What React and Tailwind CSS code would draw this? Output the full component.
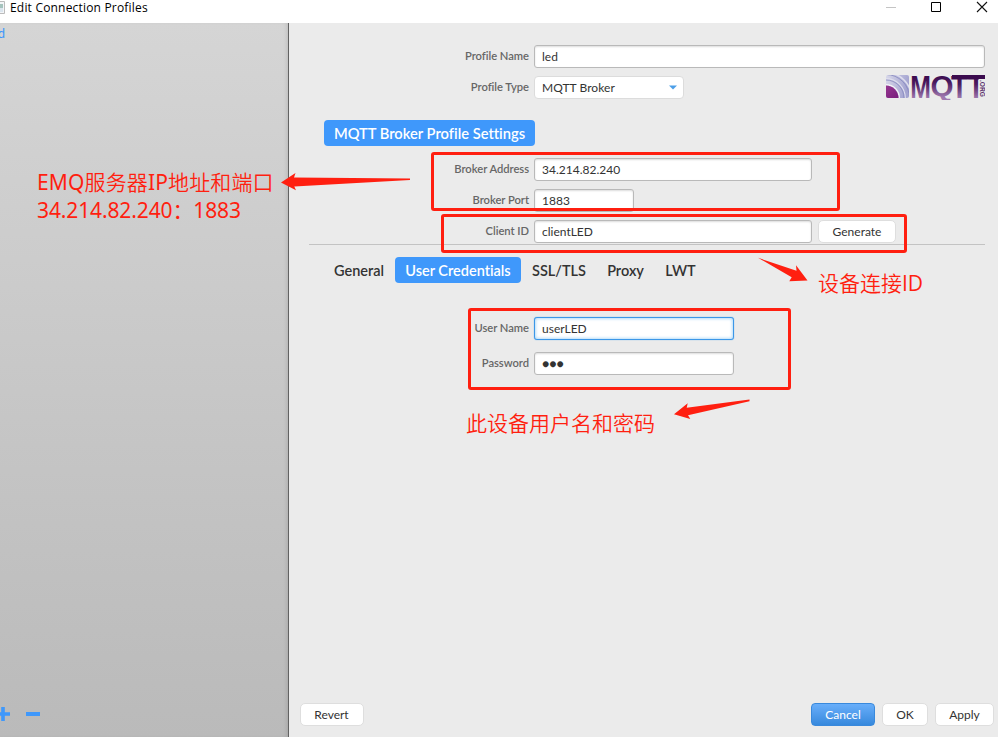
import { useState } from "react";

const inputClass =
  "h-[23px] rounded-[3px] border border-[#b9b9b9] bg-white pl-[7px] pb-px text-[12px] text-[#333] shadow-[inset_0_1px_2px_rgba(0,0,0,0.14)] outline-none";
const buttonClass =
  "flex h-[23px] items-center justify-center rounded-[5px] border border-[#dedede] bg-white pt-px text-[12px] text-[#333]";
const noteClass =
  "absolute whitespace-nowrap font-['Noto_Sans','Noto_Sans_CJK_SC',sans-serif] text-[21px] font-[350] leading-7 text-[#ff1f10]";

const tabs = [
  { name: "General", className: "w-[71px] pr-px" },
  { name: "User Credentials", className: "w-[126px]" },
  { name: "SSL/TLS", className: "w-[76px]" },
  { name: "Proxy", className: "w-[57px]" },
  { name: "LWT", className: "w-[53px]" },
];

function Label({ children }) {
  return (
    <label className="w-[240px] pr-[5px] text-right text-[11.2px] font-semibold tracking-[-0.03px] text-[#666]">
      {children}
    </label>
  );
}

function MqttLogo() {
  return (
    <svg className="h-[26px] w-[99px]" viewBox="0 0 99 26">
      <defs>
        <linearGradient id="letters" gradientUnits="userSpaceOnUse" x1="0" y1="-21" x2="0" y2="1">
          <stop offset="0" stopColor="#3b0b4e" />
          <stop offset="0.35" stopColor="#4a1b5f" />
          <stop offset="1" stopColor="#a07ab0" />
        </linearGradient>
        <linearGradient id="corner" x1="0" y1="0" x2="1" y2="1">
          <stop offset="0" stopColor="#a3429a" />
          <stop offset="1" stopColor="#6b1272" />
        </linearGradient>
        <linearGradient id="tile" x1="0" y1="0" x2="1" y2="0.3">
          <stop offset="0" stopColor="#d9d9ea" />
          <stop offset="1" stopColor="#a3a3d0" />
        </linearGradient>
        <clipPath id="tileClip">
          <rect x="0" y="1" width="23" height="23" rx="2" />
        </clipPath>
      </defs>
      <g clipPath="url(#tileClip)">
        <rect x="0" y="1" width="23" height="23" fill="url(#tile)" />
        <g fill="none">
          <circle cx="0" cy="24" r="25.5" stroke="#dedeee" strokeWidth="1.5" />
          <circle cx="0" cy="24" r="23.5" stroke="#8588be" strokeWidth="0.8" />
          <circle cx="0" cy="24" r="19.3" stroke="#dedeee" strokeWidth="1.2" />
          <circle cx="0" cy="24" r="18" stroke="#8588be" strokeWidth="0.8" />
          <circle cx="0" cy="24" r="13.3" stroke="#f3f3f8" strokeWidth="1.4" />
        </g>
        <circle cx="0" cy="24" r="12.5" fill="url(#corner)" />
      </g>
      <g fill="url(#letters)" fontFamily="Liberation Sans, sans-serif" fontWeight="700">
        <text transform="translate(24.300 23.500) scale(0.8 1)" fontSize="31">M</text>
        <text transform="translate(44.500 22) scale(1.020 1)" fontSize="29">Q</text>
        <text transform="translate(65 23.500) scale(0.9 1)" fontSize="31">T</text>
        <text transform="translate(81.400 23.500) scale(0.9 1)" fontSize="31">T</text>
      </g>
      <rect x="66" y="1" width="33" height="4" fill="#3b0b4e" />
      <rect x="92.800" y="5" width="6.200" height="19" fill="#ebebeb" />
      <text
        transform="translate(93.700 6) rotate(90)"
        fontFamily="Liberation Sans, sans-serif"
        fontSize="7"
        fontWeight="700"
        fill="#5b3570"
        textLength="17"
        lengthAdjust="spacingAndGlyphs"
      >
        .ORG
      </text>
    </svg>
  );
}

// Red boxes, arrows and captions drawn over the dialog
function Annotations() {
  return (
    <div className="pointer-events-none absolute inset-0">
      <div className="absolute left-[431px] top-[152px] h-[59px] w-[409px] rounded-[3px] border-3 border-[#ff1f10]" />
      <div className="absolute left-[441px] top-[214px] h-[39px] w-[466px] rounded-[3px] border-3 border-[#ff1f10]" />
      <div className="absolute left-[468px] top-[308px] h-[82px] w-[323px] rounded-[3px] border-3 border-[#ff1f10]" />
      <svg className="absolute inset-0 h-full w-full" viewBox="0 0 998 737" fill="#ff1f10">
        <path d="M281 182.4 295.5 173 294 177.5 410 178.6V180L294.3 186.5 296 190.3Z" />
        <path d="M758 257.8 796.5 270.8 796 265.2 807.5 280.4 789.3 281.3 791.7 277.3Z" />
        <path d="M674 414.3 687.7 403.2 686.7 407.7 749.5 399.5V401.2L688 415.2 690.3 419Z" />
      </svg>
      <div className={`${noteClass} left-[37px] top-[168px]`}>
        <p className="tracking-[0.13px]">
          <span className="font-normal">EMQ</span>服务器<span className="font-normal">IP</span>地址和端口
        </p>
        <p className="font-normal tracking-[-0.12px]">34.214.82.240：1883</p>
      </div>
      <p className={`${noteClass} left-[818px] top-[269px]`}>
        设备连接<span className="font-['Open_Sans',sans-serif] font-normal">ID</span>
      </p>
      <p className={`${noteClass} left-[466px] top-[409px]`}>此设备用户名和密码</p>
    </div>
  );
}

export default function App() {
  const [activeTab, setActiveTab] = useState("User Credentials");
  const [profile, setProfile] = useState({
    name: "led",
    address: "34.214.82.240",
    port: "1883",
    clientId: "clientLED",
    userName: "userLED",
    password: "●●●",
  });

  const handleChange = (e) => {
    const { name, value } = e.target;
    setProfile({ ...profile, [name]: value });
  };

  return (
    <div className="relative flex h-[737px] w-[998px] flex-col overflow-hidden bg-[#ebebeb] font-[Lato,sans-serif] [font-variant-ligatures:none]">
      <header className="flex h-[23px] shrink-0 justify-between bg-white">
        <div className="flex">
          <svg className="mt-px h-[13px] w-[5px]" viewBox="0 0 5 13">
            <path d="M0 .5h4.500v12H0" fill="#f3f5f7" stroke="#bbb" />
            <path d="M0 3h3v4H0z" fill="#a5c3bd" />
            <path d="M0 7h3v4H0z" fill="#dbe5ee" />
          </svg>
          <h1 className="ml-[5px] font-['Open_Sans',sans-serif] text-[12px] leading-[15px] tracking-[0.19px] text-black">
            Edit Connection Profiles
          </h1>
        </div>
        <svg className="h-[15px] w-[112px]" viewBox="0 0 112 15" fill="none">
          <path d="M0 7.5h10" stroke="#c4c4c4" />
          <path d="M45.500 2.500h9v9h-9z" stroke="#000" />
          <path d="M91 2l10 10M101 2 91 12" stroke="#111" strokeWidth="1.100" />
        </svg>
      </header>

      <div className="flex min-h-0 flex-1">
        <aside className="flex w-[289px] flex-col justify-between border-r border-[#626262] bg-linear-to-b from-[#d5d5d5] to-[#bababa] shadow-[inset_-3px_0_4px_-2px_rgba(0,0,0,0.12)]">
          <div className="flex w-[5px] justify-end overflow-hidden text-[13px] leading-[21px] text-[#3f98fb]">led</div>
          <div className="mb-[16px] flex h-[14px] items-center gap-[16px]">
            <svg className="h-[14px] w-[10px]" viewBox="0 0 10 14">
              <path d="M0 5.200h1.200V0h3.600v5.200H10v3.600H4.800V14H1.200V8.800H0z" fill="#3f98fb" />
            </svg>
            <span className="h-[4px] w-[14px] bg-[#3f98fb]" />
          </div>
        </aside>

        <main className="flex min-w-0 flex-1 flex-col">
          <div className="mt-[22px] flex items-center pl-[5px]">
            <Label>Profile Name</Label>
            <input name="name" value={profile.name} onChange={handleChange} className={`${inputClass} w-[451px]`} />
          </div>
          <div className="mt-[6px] flex h-[26px] items-center pl-[5px]">
            <Label>Profile Type</Label>
            <button className="flex h-[23px] w-[150px] items-center justify-between rounded-[4px] border border-[#dcdcdc] bg-white pl-[7px] pr-[6px] pt-px text-[12px] tracking-[0.05px] text-[#333]">
              MQTT Broker
              <svg className="h-[5px] w-[8px]" viewBox="0 0 8 5">
                <path d="M0 .5h8L4 4.500z" fill="#4d9fe8" />
              </svg>
            </button>
            <div className="ml-[202px]">
              <MqttLogo />
            </div>
          </div>

          <h2 className="ml-[35px] mt-[20px] flex h-[26px] w-[211px] items-center justify-center rounded-[4px] bg-[#3f98fb] pt-px text-[14.700px] font-semibold text-white">
            MQTT Broker Profile Settings
          </h2>

          <div className="mt-[12px] flex flex-col gap-[8px] pl-[5px]">
            <div className="flex items-center">
              <Label>Broker Address</Label>
              <input name="address" value={profile.address} onChange={handleChange} className={`${inputClass} w-[278px]`} />
            </div>
            <div className="flex items-center">
              <Label>Broker Port</Label>
              <input name="port" value={profile.port} onChange={handleChange} className={`${inputClass} w-[100px]`} />
            </div>
            <div className="flex items-center">
              <Label>Client ID</Label>
              <input name="clientId" value={profile.clientId} onChange={handleChange} className={`${inputClass} w-[278px]`} />
              <button className={`${buttonClass} ml-[6px] w-[78px]`}>Generate</button>
            </div>
          </div>

          <hr className="ml-[20px] mr-[13px] mt-px border-[#c3c3c3]" />

          <nav className="ml-[35px] mt-[12px] flex h-[26px] text-[14.500px] font-semibold">
            {tabs.map((tab) => (
              <button
                key={tab.name}
                onClick={() => setActiveTab(tab.name)}
                className={`${tab.className} flex items-center justify-center whitespace-nowrap rounded-[4px] pt-px ${
                  activeTab === tab.name ? "bg-[#3f98fb] text-white" : "text-[#333]"
                }`}
              >
                {tab.name}
              </button>
            ))}
          </nav>

          <div className="mt-[34px] flex flex-col gap-[12px] pl-[5px]">
            <div className="flex items-center">
              <Label>User Name</Label>
              <input
                name="userName"
                value={profile.userName}
                onChange={handleChange}
                className="h-[23px] w-[200px] rounded-[3px] border border-[#3b97e8] bg-white pb-px pl-[7px] text-[12px] text-[#333] shadow-[0_0_1px_#3b97e8,inset_0_0_3px_1px_#b5dcf8] outline-none"
              />
            </div>
            <div className="flex items-center">
              <Label>Password</Label>
              <input
                name="password"
                value={profile.password}
                onChange={handleChange}
                className={`${inputClass} w-[200px]`}
              />
            </div>
          </div>

          <footer className="mb-[11px] mt-auto flex pl-[11px] pr-[4px]">
            <button className={`${buttonClass} w-[64px] pr-px`}>Revert</button>
            <div className="ml-auto flex gap-[7px]">
              <button className="h-[23px] w-[64px] rounded-[4px] border border-[#3989dc] bg-linear-to-b from-[#68aefa] to-[#3689dd] text-[12px] text-white">
                Cancel
              </button>
              <button className={`${buttonClass} w-[46px]`}>OK</button>
              <button className={`${buttonClass} w-[59px]`}>Apply</button>
            </div>
          </footer>
        </main>
      </div>

      <Annotations />
    </div>
  );
}
